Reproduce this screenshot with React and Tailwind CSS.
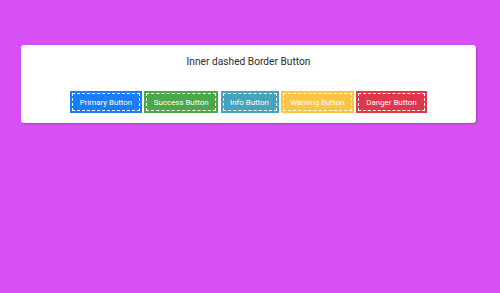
import React from "react";

const buttons = [
  { label: "Primary Button", cls: "bg-[#1a7df6] w-[72px]" },
  { label: "Success Button", cls: "bg-[#4aa84b] w-[74px]" },
  { label: "Info Button", cls: "bg-[#45a4b9] w-[58px]" },
  { label: "Warning Button", cls: "bg-[#fac547] w-[73px]" },
  { label: "Danger Button", cls: "bg-[#e0364a] w-[71px]" },
];

export default function App() {
  return (
    <div className="w-[500px] h-[293px] bg-[#d650f5] pt-[45px] font-['Roboto','Liberation_Sans',Arial,sans-serif]">
      <div className="ml-[21px] w-[455px] bg-white rounded-[3px] shadow-[1px_1px_2px_rgba(0,0,0,0.25)] pt-[11px] pb-[10px] flex flex-col items-center">
        <div className="text-[10.2px] leading-[12px] text-[#2b2b2b]">Inner dashed Border Button</div>
        <div className="mt-[23px] flex gap-[2.25px]">
          {buttons.map((b) => (
            <div
              key={b.label}
              className={`${b.cls} h-[22px] pt-px flex items-center justify-center text-white text-[7.9px] leading-none outline-1 outline-dashed outline-white -outline-offset-3`}
            >
              {b.label}
            </div>
          ))}
        </div>
      </div>
    </div>
  );
}
